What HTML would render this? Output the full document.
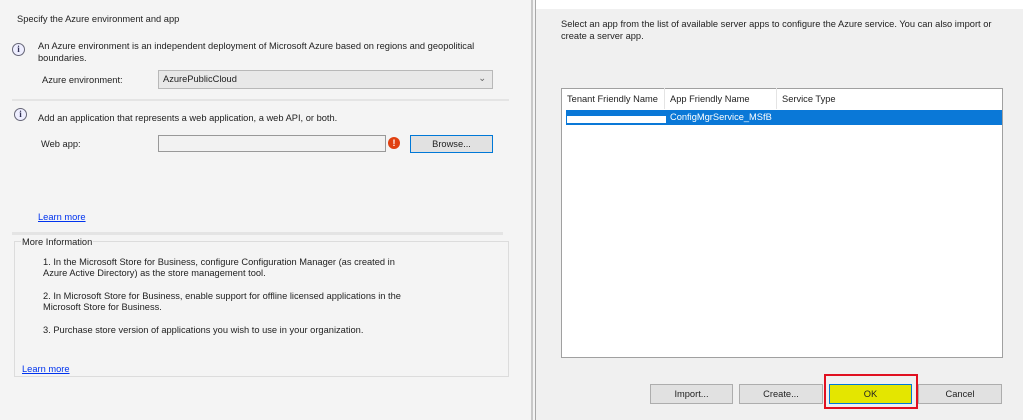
<!DOCTYPE html>
<html><head><style>
body{margin:0;width:1023px;height:420px;background:#f4f4f4;font-family:"Liberation Sans",sans-serif;font-size:9.3px;color:#222;position:relative;overflow:hidden}
.a{position:absolute;white-space:nowrap}
.lnk{color:#0033ee;text-decoration:underline}
.btn{position:absolute;background:#e1e1e1;border:1px solid #adadad;text-align:center;line-height:19px;height:19px;box-sizing:border-box}
.info{position:absolute;width:11px;height:11px;border:1px solid #667;border-radius:50%;font:bold 9px "Liberation Serif",serif;color:#335;text-align:center;line-height:11px;background:#eef}
</style></head><body>
<div class="a" style="left:17px;top:14px">Specify the Azure environment and app</div>
<div class="info" style="left:12px;top:43px">i</div>
<div class="a" style="left:38px;top:40px;line-height:12px">An Azure environment is an independent deployment of Microsoft Azure based on regions and geopolitical<br>boundaries.</div>
<div class="a" style="left:42px;top:75px">Azure environment:</div>
<div class="a" style="left:158px;top:70px;width:335px;height:19px;box-sizing:border-box;border:1px solid #b8b8b8;background:#e8e8e8;padding:3px 4px">AzurePublicCloud<span style="position:absolute;right:6px;top:2px;color:#666">&#8964;</span></div>
<div class="a" style="left:12px;top:99px;width:497px;height:2px;background:#e4e4e4"></div>
<div class="info" style="left:14px;top:108px">i</div>
<div class="a" style="left:38px;top:113px">Add an application that represents a web application, a web API, or both.</div>
<div class="a" style="left:41px;top:139px">Web app:</div>
<div class="a" style="left:158px;top:135px;width:228px;height:17px;box-sizing:border-box;border:1px solid #999;background:#f2f2f2"></div>
<div class="a" style="left:388px;top:137px;width:12px;height:12px;border-radius:50%;background:#e04010;color:#fff;font:bold 9px sans-serif;text-align:center;line-height:12px">!</div>
<div class="btn" style="left:410px;top:135px;width:83px;height:18px;line-height:16px;border:1px solid #0078d7">Browse...</div>
<div class="a lnk" style="left:38px;top:212px">Learn more</div>
<div class="a" style="left:12px;top:232px;width:491px;height:3px;background:#e4e4e4"></div>
<div class="a" style="left:14px;top:241px;width:495px;height:136px;box-sizing:border-box;border:1px solid #dcdcdc"></div>
<div class="a" style="left:21px;top:237px;background:#f4f4f4;padding:0 1px">More Information</div>
<div class="a" style="left:43px;top:257px;line-height:11.3px">1. In the Microsoft Store for Business, configure Configuration Manager (as created in<br>Azure Active Directory) as the store management tool.<br><br>2. In Microsoft Store for Business, enable support for offline licensed applications in the<br>Microsoft Store for Business.<br><br>3. Purchase store version of applications you wish to use in your organization.</div>
<div class="a lnk" style="left:22px;top:364px">Learn more</div>
<div class="a" style="left:531px;top:0;width:2px;height:420px;background:#c8c8c8"></div>
<div class="a" style="left:535px;top:0;width:1px;height:420px;background:#a8a8a8"></div>
<div class="a" style="left:536px;top:0;width:487px;height:420px;background:#f0f0f0"></div>
<div class="a" style="left:536px;top:0;width:487px;height:9px;background:#fff"></div>
<div class="a" style="left:561px;top:19px;line-height:11.5px">Select an app from the list of available server apps to configure the Azure service. You can also import or<br>create a server app.</div>
<div class="a" style="left:561px;top:88px;width:442px;height:270px;box-sizing:border-box;border:1px solid #a0a0a0;background:#fff"></div>
<div class="a" style="left:567px;top:94px">Tenant Friendly Name</div>
<div class="a" style="left:664px;top:88px;width:1px;height:21px;background:#e4e4e4"></div>
<div class="a" style="left:670px;top:94px">App Friendly Name</div>
<div class="a" style="left:776px;top:88px;width:1px;height:21px;background:#e4e4e4"></div>
<div class="a" style="left:782px;top:94px">Service Type</div>
<div class="a" style="left:566px;top:110px;width:436px;height:15px;background:#0a78d7"></div>
<div class="a" style="left:567px;top:116px;width:99px;height:7px;background:#fff"></div>
<div class="a" style="left:670px;top:112px;color:#fff">ConfigMgrService_MSfB</div>
<div class="btn" style="left:650px;top:384px;width:83px;height:20px">Import...</div>
<div class="btn" style="left:739px;top:384px;width:84px;height:20px">Create...</div>
<div class="btn" style="left:829px;top:384px;width:83px;height:20px;border:1px solid #0078d7;background:#e4e600">OK</div>
<div class="btn" style="left:918px;top:384px;width:84px;height:20px">Cancel</div>
<div class="a" style="left:824px;top:374px;width:94px;height:35px;box-sizing:border-box;border:2px solid #e01020"></div>
</body></html>
